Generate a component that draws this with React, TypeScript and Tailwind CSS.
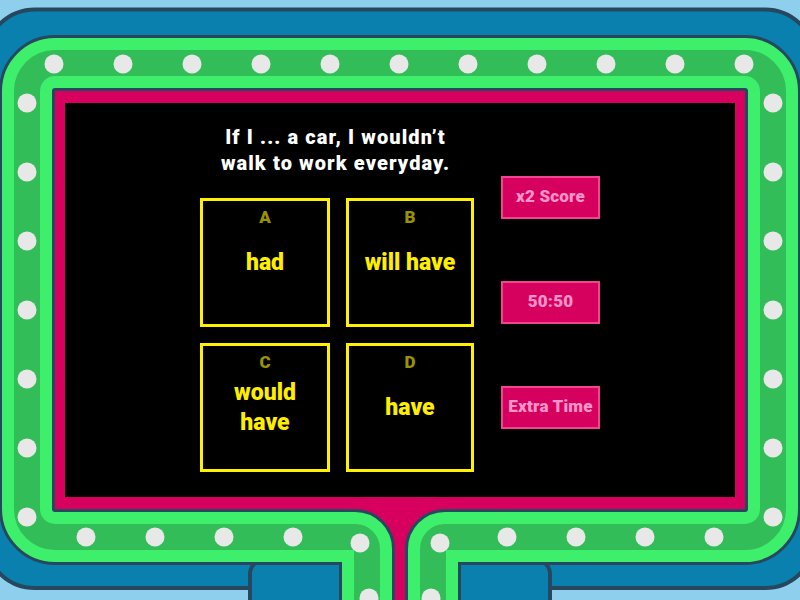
const TOP_X = [54, 123, 192, 261, 330, 399, 468, 537, 606, 675, 744]
const SIDE_Y = [103, 172, 241, 310, 379, 448, 517]
const BOTTOM_X = [86, 155, 224, 293, 507, 576, 645, 714]

const RING =
  'M367 640 L367 549 A12 12 0 0 0 355 537 L55 537 A28 28 0 0 1 27 509 L27 91 A28 28 0 0 1 55 63 L745 63 A28 28 0 0 1 773 91 L773 509 A28 28 0 0 1 745 537 L445 537 A12 12 0 0 0 433 549 L433 640'

function Frame() {
  const dots: [number, number][] = [
    ...TOP_X.map((x) => [x, 64] as [number, number]),
    ...SIDE_Y.map((y) => [27, y] as [number, number]),
    ...SIDE_Y.map((y) => [773, y] as [number, number]),
    ...BOTTOM_X.map((x) => [x, 537] as [number, number]),
    [360, 543],
    [440, 543],
    [369, 598],
    [431, 598],
  ]
  return (
    <svg className="absolute inset-0" width="800" height="600" viewBox="0 0 800 600">
      <rect x="0" y="0" width="800" height="600" fill="#8ecfee" />
      {/* blue outer frame */}
      <rect x="-15" y="9.5" width="830" height="578.5" rx="50" fill="#0a80ae" stroke="#26475e" strokeWidth="4" />
      <rect x="250" y="560" width="300" height="80" rx="14" fill="#0a80ae" stroke="#26475e" strokeWidth="4" />
      <rect x="252" y="575" width="296" height="20" fill="#0a80ae" />
      {/* pink border + stem */}
      <rect x="40" y="75" width="720" height="450" fill="#d8005f" />
      <rect x="367" y="500" width="66" height="140" fill="#d8005f" />
      {/* green ring */}
      <path d={RING} fill="none" stroke="#26475e" strokeWidth="56" />
      <path d={RING} fill="none" stroke="#3def6b" strokeWidth="50" />
      <path d={RING} fill="none" stroke="#33bd58" strokeWidth="26" />
      {dots.map(([x, y], i) => (
        <circle key={i} cx={x} cy={y} r="9.5" fill="#e8e8e8" />
      ))}
    </svg>
  )
}

const answers = [
  { letter: 'A', text: ['had'] },
  { letter: 'B', text: ['will have'] },
  { letter: 'C', text: ['would', 'have'] },
  { letter: 'D', text: ['have'] },
]

const powerUps = ['x2 Score', '50:50', 'Extra Time']

export default function App() {
  return (
    <div className="relative w-[800px] h-[600px] overflow-hidden font-['Roboto',sans-serif]">
      <Frame />
      <div className="relative pt-[103px] pl-[65px]">
        <div className="w-[670px] h-[394px] bg-black flex items-center justify-center gap-[27px]">
          <div className="flex flex-col items-center mb-[4px]">
            <p className="text-white font-black text-[20px] leading-[26px] text-center tracking-[1.1px] mr-[3px]">
              If I ... a car, I wouldn’t
              <br />
              walk to work everyday.
            </p>
            <div className="grid grid-cols-[130px_128px] gap-x-4 gap-y-4 mt-[22px]">
              {answers.map((a) => (
                <div
                  key={a.letter}
                  className="h-[129px] border-[3px] border-[#fff200] flex flex-col items-center"
                >
                  <div className="h-[28px] pt-[7px] text-[17px] leading-[18px] font-black text-[#9a9200]">{a.letter}</div>
                  <div className="flex-1 flex flex-col items-center justify-center text-[#ffee00] font-black text-[23px] leading-[30px] text-center pt-[1px]">
                    {a.text.map((t) => (
                      <span key={t}>{t}</span>
                    ))}
                  </div>
                  <div className="h-[28px]" />
                </div>
              ))}
            </div>
          </div>
          <div className="flex flex-col gap-[62px] mt-[4px]">
            {powerUps.map((p) => (
              <div
                key={p}
                className="w-[99px] h-[43px] bg-[#d6005f] border-2 border-[#f0458f] flex items-center justify-center text-[#ff95c8] font-black text-[17px] tracking-[0.2px]"
              >
                {p}
              </div>
            ))}
          </div>
        </div>
      </div>
    </div>
  )
}
